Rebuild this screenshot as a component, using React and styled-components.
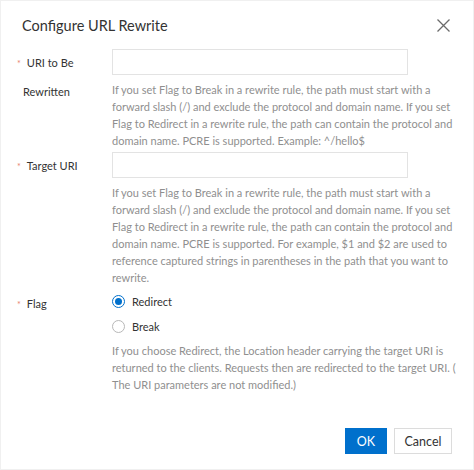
import React, {useState} from 'react';
import styled, {createGlobalStyle} from 'styled-components';

const Global = createGlobalStyle`
  html, body {
    margin: 0;
    padding: 0;
    background: #fff;
  }
  body {
    font-family: Lato, "Open Sans", sans-serif;
    color: #333;
  }
`;

const Dialog = styled.div`
  width: 474px;
  height: 470px;
  box-sizing: border-box;
  background: #fff;
  display: flex;
  flex-direction: column;
  border: 1px solid #f0f0f0;
`;

const Header = styled.div`
  display: flex;
  align-items: center;
  justify-content: space-between;
  padding: 12px 23px 0 21px;
  height: 24px;
`;

const Title = styled.div`
  font-size: 14.5px;
  color: #333;
`;

const Close = styled.button`
  border: none;
  background: none;
  padding: 0;
  width: 13px;
  height: 13px;
  display: flex;
  cursor: pointer;
`;

const Body = styled.div`
  flex: 1;
  padding: 12px 0 0 16px;
  display: flex;
  flex-direction: column;
  gap: 3px;
`;

const Row = styled.div`
  display: flex;
`;

const Label = styled.div`
  width: 95px;
  flex-shrink: 0;
  font-size: 11px;
  line-height: 28px;
  color: #333;
  padding-top: ${p => p.top || 0}px;
  &::before {
    content: '*';
    font-size: 9px;
    color: #e8826f;
    margin-right: 6px;
  }
`;

const LabelLine = styled.div`
  padding-left: 6px;
`;

const Field = styled.div`
  width: 330px;
  display: flex;
  flex-direction: column;
`;

const Input = styled.input`
  width: 296px;
  height: 26px;
  box-sizing: border-box;
  border: 1px solid #e3e3e3;
  outline: none;
  padding: 0 8px;
  font-family: inherit;
  font-size: 11px;
`;

const Help = styled.p`
  margin: ${p => p.gap || 6}px 0 0;
  font-size: 11px;
  line-height: 17px;
  color: #8f8f8f;
  white-space: nowrap;
`;

const Radio = styled.label`
  display: flex;
  align-items: center;
  height: 25px;
  font-size: 11px;
  color: #333;
  cursor: pointer;
`;

const Dot = styled.span`
  width: 13px;
  height: 13px;
  box-sizing: border-box;
  border-radius: 50%;
  border: 1px solid ${p => (p.on ? '#0070cc' : '#b8b8b8')};
  margin: 0 7px 0 0;
  display: flex;
  align-items: center;
  justify-content: center;
  &::after {
    content: '';
    width: 7px;
    height: 7px;
    border-radius: 50%;
    background: ${p => (p.on ? '#0070cc' : 'transparent')};
  }
`;

const Footer = styled.div`
  display: flex;
  justify-content: flex-end;
  gap: 7px;
  padding: 0 21px 15px 0;
`;

const Button = styled.button`
  height: 26px;
  padding: 0;
  width: ${p => (p.primary ? 42 : 58)}px;
  border: 1px solid ${p => (p.primary ? '#0070cc' : '#dcdcdc')};
  background: ${p => (p.primary ? '#0070cc' : '#fff')};
  color: ${p => (p.primary ? '#fff' : '#333')};
  font-family: inherit;
  font-size: 12.5px;
  cursor: pointer;
`;

const lines = text =>
  text.map((l, i) => (
    <React.Fragment key={i}>
      {i > 0 && <br />}
      {l}
    </React.Fragment>
  ));

const uriHelp = [
  'If you set Flag to Break in a rewrite rule, the path must start with a',
  'forward slash (/) and exclude the protocol and domain name. If you set',
  'Flag to Redirect in a rewrite rule, the path can contain the protocol and',
  'domain name. PCRE is supported. Example: ^/hello$',
];

const targetHelp = [
  'If you set Flag to Break in a rewrite rule, the path must start with a',
  'forward slash (/) and exclude the protocol and domain name. If you set',
  'Flag to Redirect in a rewrite rule, the path can contain the protocol and',
  'domain name. PCRE is supported. For example, $1 and $2 are used to',
  'reference captured strings in parentheses in the path that you want to',
  'rewrite.',
];

const flagHelp = [
  'If you choose Redirect, the Location header carrying the target URI is',
  'returned to the clients. Requests then are redirected to the target URI. (',
  'The URI parameters are not modified.)',
];

export default function App() {
  const [flag, setFlag] = useState('redirect');
  return (
    <>
      <Global />
      <Dialog>
        <Header>
          <Title>Configure URL Rewrite</Title>
          <Close aria-label="close">
            <svg width="13" height="13" viewBox="0 0 13 13">
              <path d="M0.5 0.5L12.5 12.5M12.5 0.5L0.5 12.5" stroke="#6b6b6b" strokeWidth="1.3" />
            </svg>
          </Close>
        </Header>
        <Body>
          <Row>
            <Label>
              URI to Be
              <LabelLine>Rewritten</LabelLine>
            </Label>
            <Field>
              <Input />
              <Help>{lines(uriHelp)}</Help>
            </Field>
          </Row>
          <Row>
            <Label>Target URI</Label>
            <Field>
              <Input />
              <Help>{lines(targetHelp)}</Help>
            </Field>
          </Row>
          <Row>
            <Label top={1}>Flag</Label>
            <Field>
              <Radio onClick={() => setFlag('redirect')}>
                <Dot on={flag === 'redirect'} />
                Redirect
              </Radio>
              <Radio onClick={() => setFlag('break')}>
                <Dot on={flag === 'break'} />
                Break
              </Radio>
              <Help gap={3}>{lines(flagHelp)}</Help>
            </Field>
          </Row>
        </Body>
        <Footer>
          <Button primary>OK</Button>
          <Button>Cancel</Button>
        </Footer>
      </Dialog>
    </>
  );
}
